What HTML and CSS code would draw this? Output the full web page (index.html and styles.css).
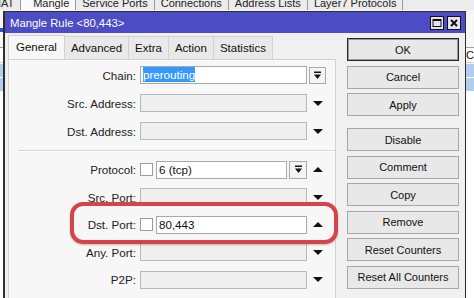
FILE: index.html
```html
<!DOCTYPE html>
<html lang="en">
<head>
    <meta charset="UTF-8">
    <title>Mangle Rule</title>
    <link rel="stylesheet" href="styles.css">
</head>
<body>
    <!-- Firewall window behind the dialog -->
    <div class="fw-window">
        <div class="fw-tabs">
            <div class="fw-tab fw-tab-cut">NAT</div>
            <div class="fw-tab fw-tab-active">Mangle</div>
            <div class="fw-tab">Service Ports</div>
            <div class="fw-tab">Connections</div>
            <div class="fw-tab">Address Lists</div>
            <div class="fw-tab">Layer7 Protocols</div>
        </div>
        <div class="fw-toolbar"><span class="fw-add"></span></div>
        <div class="fw-header">
            <span class="fw-col">Comment</span>
        </div>
        <div class="fw-row fw-row-sel"></div>
        <div class="fw-row fw-row-sel"></div>
    </div>

    <!-- Mangle Rule dialog -->
    <div class="dialog">
        <div class="dialog-title">
            <span class="dialog-caption">Mangle Rule &lt;80,443&gt;</span>
            <div class="title-btns">
                <span class="title-btn">
                    <svg width="10" height="10" viewBox="0 0 10 10"><rect x="1" y="1.5" width="8" height="7" fill="none" stroke="#111" stroke-width="1"/><rect x="1" y="1" width="8" height="2" fill="#111"/></svg>
                </span>
                <span class="title-btn">
                    <svg width="10" height="10" viewBox="0 0 10 10"><path d="M2 2 L8 8 M8 2 L2 8" stroke="#111" stroke-width="2"/></svg>
                </span>
            </div>
        </div>
        <div class="dialog-body">
            <div class="tabs-area">
                <div class="tabs">
                    <div class="tab tab-active">General</div>
                    <div class="tab">Advanced</div>
                    <div class="tab">Extra</div>
                    <div class="tab">Action</div>
                    <div class="tab">Statistics</div>
                </div>
                <div class="panel">
                    <div class="group">
                        <div class="row">
                            <div class="label">Chain:</div>
                            <div class="field">
                                <div class="input"><span class="selected">prerouting</span></div>
                            </div>
                            <div class="arrow">
                                <span class="drop-btn"><svg width="9" height="9" viewBox="0 0 9 9"><rect x="1" y="0.5" width="7" height="1.5" fill="#111"/><path d="M1 3.5 H8 L4.5 8 Z" fill="#111"/></svg></span>
                            </div>
                        </div>
                        <div class="row">
                            <div class="label">Src. Address:</div>
                            <div class="field"><div class="input input-off"></div></div>
                            <div class="arrow"><span class="tri-down"></span></div>
                        </div>
                        <div class="row">
                            <div class="label">Dst. Address:</div>
                            <div class="field"><div class="input input-off"></div></div>
                            <div class="arrow"><span class="tri-down"></span></div>
                        </div>
                    </div>
                    <div class="separator"></div>
                    <div class="group group-ports">
                        <div class="row">
                            <div class="label">Protocol:</div>
                            <div class="field">
                                <span class="check"></span>
                                <div class="input">6 (tcp)</div>
                                <span class="drop-btn drop-wide"><svg width="9" height="9" viewBox="0 0 9 9"><rect x="1" y="0.5" width="7" height="1.5" fill="#111"/><path d="M1 3.5 H8 L4.5 8 Z" fill="#111"/></svg></span>
                            </div>
                            <div class="arrow"><span class="tri-up"></span></div>
                        </div>
                        <div class="row">
                            <div class="label">Src. Port:</div>
                            <div class="field"><div class="input input-off"></div></div>
                            <div class="arrow"><span class="tri-down"></span></div>
                        </div>
                        <div class="row">
                            <div class="label">Dst. Port:</div>
                            <div class="field">
                                <span class="check"></span>
                                <div class="input">80,443</div>
                            </div>
                            <div class="arrow"><span class="tri-up"></span></div>
                        </div>
                        <div class="row">
                            <div class="label">Any. Port:</div>
                            <div class="field"><div class="input input-off"></div></div>
                            <div class="arrow"><span class="tri-down"></span></div>
                        </div>
                        <div class="row">
                            <div class="label">P2P:</div>
                            <div class="field"><div class="input input-off"></div></div>
                            <div class="arrow"><span class="tri-down"></span></div>
                        </div>
                    </div>
                    <!-- annotation around Dst. Port -->
                    <div class="highlight"></div>
                </div>
            </div>
            <div class="actions">
                <button class="btn btn-default">OK</button>
                <button class="btn">Cancel</button>
                <button class="btn">Apply</button>
                <button class="btn btn-split">Disable</button>
                <button class="btn">Comment</button>
                <button class="btn">Copy</button>
                <button class="btn">Remove</button>
                <button class="btn">Reset Counters</button>
                <button class="btn">Reset All Counters</button>
            </div>
        </div>
    </div>
</body>
</html>
```

FILE: styles.css
```css
/* Global */
body {
    margin: 0;
    width: 474px;
    height: 298px;
    overflow: hidden;
    position: relative;
    background-color: #ffffff;
    font-family: "Liberation Sans", Arial, sans-serif;
    font-size: 11px;
    color: #111;
}
/* Background firewall window */
.fw-tabs {
    display: flex;
    height: 10px;
    overflow: hidden;
    background-color: #ececec;
}
.fw-tab {
    line-height: 13px;
    margin-top: -3px;
    padding: 0 6px;
    border-right: 1px solid #9a9a9a;
    white-space: nowrap;
    color: #222;
}
.fw-tab-cut {
    margin-left: -13px;
}
.fw-tab-active {
    padding-left: 12px;
    background-color: #fafafa;
}
.fw-toolbar {
    height: 37px;
    background-color: #f7f7f7;
    padding-top: 18px;
    box-sizing: border-box;
}
.fw-add {
    display: block;
    width: 3px;
    height: 4px;
    background-color: #2f55c8;
}
.fw-header {
    height: 14px;
    line-height: 14px;
    border-top: 1px solid #a0a0a0;
    border-bottom: 1px solid #d0d0d0;
    white-space: nowrap;
    overflow: hidden;
}
.fw-col {
    display: block;
    margin-left: 466px;
}
.fw-row {
    height: 13px;
    margin-top: 1px;
}
.fw-row-sel {
    background-color: #b3cdef;
}
/* Dialog window */
.dialog {
    position: absolute;
    left: 3px;
    top: 11px;
    width: 463px;
    height: 300px;
    box-sizing: border-box;
    border: 1px solid #2e2e2e;
    border-left-width: 2px;
    background-color: #f0f0f0;
}
.dialog-title {
    display: flex;
    align-items: center;
    justify-content: space-between;
    height: 21px;
    padding: 0 4px 0 5px;
    background-color: #4c4cc4;
    color: #ffffff;
    font-size: 11.3px;
}
.title-btns {
    display: flex;
    gap: 3px;
}
.title-btn {
    display: flex;
    align-items: center;
    justify-content: center;
    width: 14px;
    height: 14px;
    box-sizing: border-box;
    border: 1px solid #111;
    background-color: #e4e4ee;
}
.dialog-body {
    display: flex;
    padding: 1px 0 0 3px;
}
/* Tabs */
.tabs-area {
    width: 328px;
}
.tabs {
    display: flex;
    align-items: flex-end;
    height: 25px;
}
.tab {
    height: 23px;
    line-height: 23px;
    padding: 0 6px;
    box-sizing: border-box;
    border: 1px solid #d2d2d2;
    border-bottom: none;
    border-left: none;
    background-color: #e9e9e9;
    white-space: nowrap;
    font-size: 11.5px;
}
.tab-active {
    height: 25px;
    padding: 0 7px;
    border-left: 1px solid #d2d2d2;
    background-color: #f7f7f7;
    margin-bottom: -1px;
    position: relative;
}
/* Panel */
.panel {
    position: relative;
    height: 240px;
    box-sizing: border-box;
    border: 1px solid #d2d2d2;
    background-color: #f7f7f7;
    padding-top: 1px;
    font-size: 11.6px;
}
.row {
    display: flex;
    align-items: center;
    height: 28px;
}
.group-ports .row {
    height: 27.5px;
}
.label {
    width: 127px;
    text-align: right;
    margin-right: 4px;
    color: #222;
}
.field {
    display: flex;
    align-items: center;
    width: 167px;
}
.input {
    flex: 1;
    height: 18px;
    line-height: 16px;
    box-sizing: border-box;
    border: 1px solid #a9a9a9;
    background-color: #ffffff;
    padding-left: 2px;
    white-space: nowrap;
}
.input-off {
    background-color: #efefef;
    border-color: #b9b9b9;
}
.selected {
    background-color: #3399ff;
    color: #ffffff;
    padding: 1px 0;
}
.check {
    width: 13px;
    height: 13px;
    box-sizing: border-box;
    border: 1px solid #9c9c9c;
    background-color: #ffffff;
    margin-right: 3px;
}
.drop-btn {
    display: flex;
    align-items: center;
    justify-content: center;
    width: 17px;
    height: 17px;
    box-sizing: border-box;
    border: 1px solid #a9a9a9;
    background-color: #f4f4f4;
}
.drop-wide {
    width: 18px;
    height: 18px;
    margin-left: 2px;
}
.arrow {
    display: flex;
    align-items: center;
    justify-content: center;
    width: 21px;
}
.tri-down {
    width: 0;
    height: 0;
    border-left: 5px solid transparent;
    border-right: 5px solid transparent;
    border-top: 5px solid #111;
}
.tri-up {
    width: 0;
    height: 0;
    border-left: 5px solid transparent;
    border-right: 5px solid transparent;
    border-bottom: 5px solid #111;
}
.separator {
    margin: 5px 0 4px 9px;
    border-top: 1px solid #d6d6d6;
    border-bottom: 1px solid #ffffff;
}
.highlight {
    position: absolute;
    left: 61px;
    top: 142px;
    width: 268px;
    height: 42px;
    box-sizing: border-box;
    border: 4px solid #d8434a;
    border-radius: 13px;
    box-shadow: 0 1px 2px rgba(0, 0, 0, 0.25);
}
/* Buttons */
.actions {
    display: flex;
    flex-direction: column;
    gap: 4.5px;
    width: 112px;
    margin-left: 11px;
    padding-top: 4px;
}
.btn {
    height: 23px;
    box-sizing: border-box;
    border: 1px solid #a6a6a6;
    background-color: #e8e8e8;
    font-family: inherit;
    font-size: 11px;
    color: #111;
    padding: 0;
}
.btn-default {
    border: 1px solid #2a2a2a;
    box-shadow: inset 0 0 0 1px #9a9a9a;
}
.btn-split {
    margin-top: 7.5px;
}
```
